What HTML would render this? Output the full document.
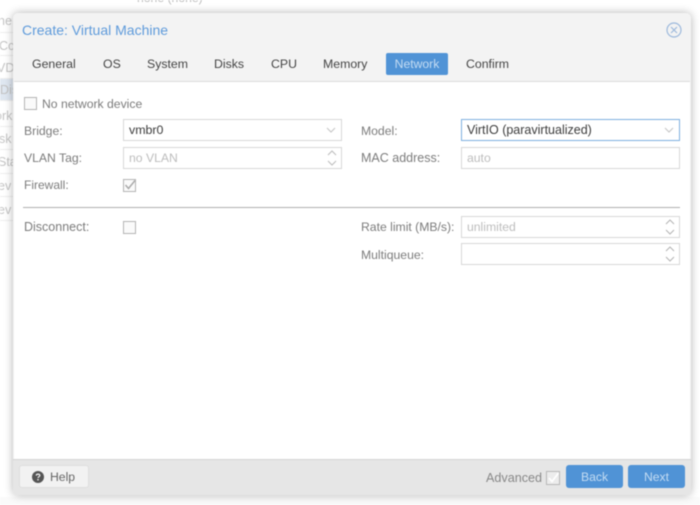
<!DOCTYPE html>
<html><head><meta charset="utf-8"><style>
html,body{margin:0;padding:0;width:700px;height:505px;overflow:hidden;background:#fff}
#root{position:relative;width:700px;height:505px;overflow:hidden;font-family:"Liberation Sans",sans-serif;font-size:12.2px;color:#555;filter:blur(.45px)}
.a{position:absolute;white-space:nowrap}
.bgt{color:#c4c4c4;left:-3px;font-size:12.5px}
.ln{position:absolute;left:0;width:13px;height:1px;background:#eee}
#dlg{position:absolute;left:13px;top:13px;width:678px;height:482px;background:#f3f3f3;border-radius:5px;box-shadow:0 0 9px rgba(0,0,0,.3)}
#body{position:absolute;left:14px;top:82px;width:676px;height:377px;background:#fff;box-shadow:0 -1px 0 #ddd}
#foot{position:absolute;left:13px;top:459px;width:678px;height:36px;background:#e6e6e6;border-top:1px solid #d4d4d4;box-sizing:border-box;border-radius:0 0 5px 5px}
.tab{position:absolute;top:56px;line-height:16px;color:#444;font-size:12.3px}
.lbl{color:#7c7c7c;line-height:16px}
.f{position:absolute;box-sizing:border-box;height:22px;border:1px solid #d8d8d8;background:#fff;line-height:20px;padding-left:5px;white-space:nowrap;color:#bdbdbd}
.dark{color:#3c3c3c;font-size:12.4px}
.cb{position:absolute;box-sizing:border-box;width:13px;height:13px;border:1.3px solid #b4b4b4;background:#fafafa}
svg{position:absolute;overflow:visible}
.btn{position:absolute;top:465px;height:23px;box-sizing:border-box;background:#5093d6;border-radius:3px;color:#c4dcf3;line-height:24px;text-align:center}
</style></head><body><div id="root">
<span class="a" style="left:137px;top:-9px;color:#bbb">none (none)</span>
<span class="a bgt" style="top:14px;left:-2px">ne</span><span class="a bgt" style="top:39px;left:-1px">Cc</span>
<span class="a bgt" style="top:61px;left:-3px">VD</span>
<div class="a" style="left:0;top:78px;width:13px;height:22px;background:#dfe7f1"></div>
<span class="a bgt" style="top:83px;left:0">Dis</span><span class="a bgt" style="top:109px;left:-5px">ork</span>
<span class="a bgt" style="top:132px;left:-1px">sk</span><span class="a bgt" style="top:155px;left:-2px">Sta</span>
<span class="a bgt" style="top:179px;left:-2px">ev</span><span class="a bgt" style="top:203px;left:-2px">ev</span>
<div class="ln" style="top:32px"></div><div class="ln" style="top:55px"></div><div class="ln" style="top:78px"></div><div class="ln" style="top:100px"></div><div class="ln" style="top:126px"></div><div class="ln" style="top:149px"></div><div class="ln" style="top:173px"></div><div class="ln" style="top:196px"></div><div class="ln" style="top:220px"></div>
<div class="a" style="left:0;top:497px;width:700px;height:8px;background:#fafafa"></div>
<div id="dlg"></div><div id="body"></div><div id="foot"></div>

<span class="a" style="left:22px;top:22px;font-size:14px;line-height:17px;color:#5f9bdb">Create: Virtual Machine</span>
<svg style="left:666px;top:22px" width="16" height="16" viewBox="0 0 16 16" fill="none" stroke="#9db9dc" stroke-width="1.2"><circle cx="8" cy="8" r="7"/><path d="M5 5L11 11M11 5L5 11"/></svg>

<span class="tab" style="left:32px">General</span>
<span class="tab" style="left:103px">OS</span>
<span class="tab" style="left:147px">System</span>
<span class="tab" style="left:214px">Disks</span>
<span class="tab" style="left:271px">CPU</span>
<span class="tab" style="left:323px">Memory</span>
<div class="a" style="left:386px;top:53px;width:62px;height:22px;background:#5093d6;border-radius:2px;color:#c4dcf3;text-align:center;line-height:22px">Network</div>
<span class="tab" style="left:466px">Confirm</span>

<div class="cb" style="left:24px;top:97px"></div>
<span class="a lbl" style="left:42px;top:96px">No network device</span>

<span class="a lbl" style="left:24px;top:123px">Bridge:</span>
<div class="f dark" style="left:123px;top:119px;width:219px;line-height:21px">vmbr0</div>
<svg style="left:326px;top:127px" width="10" height="6" fill="none" stroke="#c4c4c4"><path d="M1 1L5 5L9 1"/></svg>

<span class="a lbl" style="left:24px;top:150px">VLAN Tag:</span>
<div class="f" style="left:123px;top:147px;width:219px">no VLAN</div>
<svg style="left:327px;top:150px" width="10" height="16" fill="none" stroke="#bcbcbc"><path d="M1 5L5 1L9 5M1 11L5 15L9 11"/></svg>

<span class="a lbl" style="left:24px;top:177px;font-size:12px">Firewall:</span>
<div class="cb" style="left:123px;top:179px"></div>
<svg style="left:123px;top:178px" width="13" height="13" fill="none" stroke="#a8a8a8" stroke-width="1.4"><path d="M2.5 7L5.5 10.5L12 2.5"/></svg>

<span class="a lbl" style="left:361px;top:123px">Model:</span>
<div class="f dark" style="left:461px;top:119px;width:219px;border-color:#7fb0e0;line-height:21px;font-size:12.5px">VirtIO (paravirtualized)</div>
<svg style="left:664px;top:127px" width="10" height="6" fill="none" stroke="#c4c4c4"><path d="M1 1L5 5L9 1"/></svg>

<span class="a lbl" style="left:361px;top:150px;font-size:12.5px">MAC address:</span>
<div class="f" style="left:461px;top:147px;width:219px">auto</div>

<div class="a" style="left:23px;top:207px;width:657px;height:1px;background:#b0b0b0"></div>

<span class="a lbl" style="left:24px;top:219px;font-size:12.5px">Disconnect:</span>
<div class="cb" style="left:123px;top:221px"></div>

<span class="a lbl" style="left:361px;top:219px">Rate limit (MB/s):</span>
<div class="f" style="left:461px;top:216px;width:219px">unlimited</div>
<svg style="left:665px;top:219px" width="10" height="16" fill="none" stroke="#b4b4b4"><path d="M1 5L5 1L9 5M1 11L5 15L9 11"/></svg>

<span class="a lbl" style="left:361px;top:247px">Multiqueue:</span>
<div class="f" style="left:461px;top:243px;width:219px"></div>
<svg style="left:665px;top:246px" width="10" height="16" fill="none" stroke="#b4b4b4"><path d="M1 5L5 1L9 5M1 11L5 15L9 11"/></svg>

<div class="a" style="left:19px;top:465px;width:70px;height:23px;box-sizing:border-box;background:#f2f2f2;border:1px solid #dedede;border-radius:3px"></div>
<svg style="left:32px;top:471px" width="12" height="12" viewBox="0 0 12 12"><circle cx="6" cy="6" r="6" fill="#555"/><path d="M4.2 4.6C4.3 3.6 5 3.1 6 3.1C7 3.1 7.8 3.7 7.8 4.6C7.8 5.6 6 5.8 6 7" fill="none" stroke="#f4f4f4" stroke-width="1.2"/><rect x="5.3" y="8" width="1.4" height="1.4" fill="#f4f4f4"/></svg>
<span class="a" style="left:50px;top:469px;line-height:16px;color:#666">Help</span>

<span class="a" style="left:486px;top:470px;line-height:16px;color:#888;font-size:12.6px">Advanced</span>
<div class="cb" style="left:546px;top:471px;background:#ececec;width:14px;height:14px;border:1.5px solid #b8b8b8"></div>
<svg style="left:546px;top:470px" width="14" height="14" fill="none" stroke="#fff" stroke-width="1.7"><path d="M3 8L6 11.5L12.5 3"/></svg>
<div class="btn" style="left:566px;width:57px">Back</div>
<div class="btn" style="left:628px;width:57px">Next</div>
</div></body></html>
